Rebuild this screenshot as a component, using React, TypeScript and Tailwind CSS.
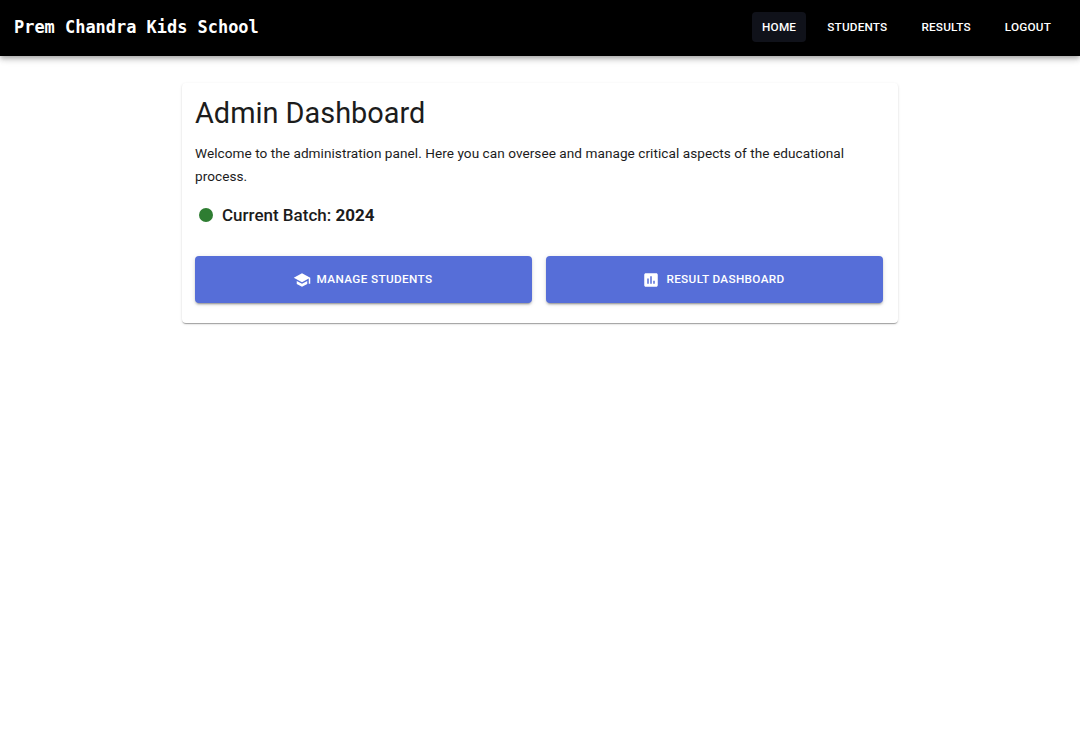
const navItems = [
  { label: "Home", className: "mr-[11px] bg-[#10121a]" },
  { label: "Students", className: "mr-[14px]" },
  { label: "Results", className: "mr-[14px]" },
  { label: "Logout", className: "" },
];

const SchoolIcon = () => (
  <svg className="w-[18px] h-[18px] fill-current" viewBox="0 0 24 24">
    <path d="M5 13.18v4L12 21l7-3.82v-4L12 17l-7-3.82zM12 3 1 9l11 6 9-4.91V17h2V9L12 3z" />
  </svg>
);

const AssessmentIcon = () => (
  <svg className="w-[18px] h-[18px] fill-current" viewBox="0 0 24 24">
    <path d="M19 3H5c-1.1 0-2 .9-2 2v14c0 1.1.9 2 2 2h14c1.1 0 2-.9 2-2V5c0-1.1-.9-2-2-2zM9 17H7v-7h2v7zm4 0h-2V7h2v10zm4 0h-2v-4h2v4z" />
  </svg>
);

const App = () => {
  return (
    <div className="min-h-[756px] bg-white font-['Roboto',sans-serif] text-[#1c1c1c]">
      <nav className="h-[56px] bg-black flex items-center justify-between pl-[14px] pr-[19px] shadow-[0_2px_4px_-1px_rgba(0,0,0,0.2),0_4px_5px_0_rgba(0,0,0,0.14),0_1px_10px_0_rgba(0,0,0,0.12)]">
        <div className="font-['DejaVu_Sans_Mono',monospace] font-bold text-[16.95px] text-white">
          Prem Chandra Kids School
        </div>
        <div className="flex items-center mb-[2px]">
          {navItems.map((item) => (
            <button
              key={item.label}
              className={`h-[30px] pt-[2px] px-[10px] rounded text-[11.75px] font-medium uppercase tracking-[0.2px] text-white ${item.className}`}
            >
              {item.label}
            </button>
          ))}
        </div>
      </nav>

      <main className="w-[716px] mx-auto pt-[27px]">
        <div className="rounded bg-white pl-[13px] pr-[15px] pt-[12px] pb-[20px] shadow-[0_2px_1px_-1px_rgba(0,0,0,0.2),0_1px_1px_0_rgba(0,0,0,0.14),0_1px_3px_0_rgba(0,0,0,0.12)]">
          <h1 className="text-[28.9px] leading-[36px] font-normal mb-[11px]">Admin Dashboard</h1>
          <p className="text-[13.6px] leading-[23px] tracking-[0.05px] mb-[15px]">
            Welcome to the administration panel. Here you can oversee and manage critical aspects of the educational process.
          </p>
          <div className="flex items-center gap-[9.5px] pl-[3.5px] text-[17px] leading-[24px] font-medium mb-[29px]">
            <span className="w-[14px] h-[14px] rounded-full bg-[#2e7d32]" />
            <span>
              Current Batch: <strong className="font-bold">2024</strong>
            </span>
          </div>
          <div className="grid grid-cols-2 gap-[14px]">
            <button className="h-[47px] pr-[2px] rounded bg-[#566ed8] text-white flex items-center justify-center gap-[6px] text-[11.75px] font-medium uppercase tracking-[0.35px] shadow-[0_3px_1px_-2px_rgba(0,0,0,0.2),0_2px_2px_0_rgba(0,0,0,0.14),0_1px_5px_0_rgba(0,0,0,0.12)]">
              <SchoolIcon />
              Manage Students
            </button>
            <button className="h-[47px] pr-[2px] rounded bg-[#566ed8] text-white flex items-center justify-center gap-[6px] text-[11.75px] font-medium uppercase tracking-[0.35px] shadow-[0_3px_1px_-2px_rgba(0,0,0,0.2),0_2px_2px_0_rgba(0,0,0,0.14),0_1px_5px_0_rgba(0,0,0,0.12)]">
              <AssessmentIcon />
              Result Dashboard
            </button>
          </div>
        </div>
      </main>
    </div>
  );
};

export default App;
